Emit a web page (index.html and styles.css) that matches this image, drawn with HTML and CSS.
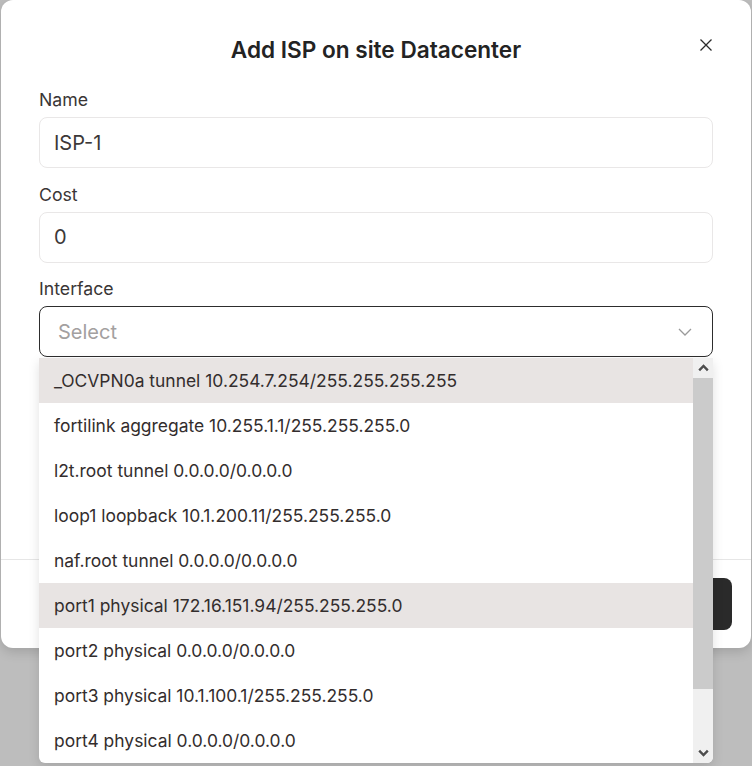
FILE: index.html
```html
<!DOCTYPE html>
<html lang="en">
<head>
    <meta charset="UTF-8">
    <meta name="viewport" content="width=device-width, initial-scale=1.0">
    <title>Add ISP</title>
    <link rel="stylesheet" href="styles.css">
</head>
<body>
    <div class="modal">
        <div class="modal-header">
            <h2 class="modal-title">Add ISP on site Datacenter</h2>
            <button class="close-btn" aria-label="Close">
                <svg width="14" height="14" viewBox="0 0 14 14">
                    <path d="M1.5 1.5 L12.5 12.5 M12.5 1.5 L1.5 12.5" stroke="#2b2b2b" stroke-width="1.3" fill="none"/>
                </svg>
            </button>
        </div>

        <div class="modal-body">
            <div class="field">
                <label class="field-label">Name</label>
                <input class="field-input" type="text" value="ISP-1">
            </div>
            <div class="field">
                <label class="field-label">Cost</label>
                <input class="field-input" type="text" value="0">
            </div>
            <div class="field">
                <label class="field-label">Interface</label>
                <div class="select-wrap">
                    <div class="select-box">
                        <span class="select-placeholder">Select</span>
                        <svg class="select-chevron" width="14" height="8" viewBox="0 0 14 8">
                            <path d="M1 1 L7 7 L13 1" stroke="#9a9a9a" stroke-width="1.3" fill="none"/>
                        </svg>
                    </div>
                    <div class="dropdown">
                        <ul class="options">
                            <li class="option active">_OCVPN0a tunnel 10.254.7.254/255.255.255.255</li>
                            <li class="option">fortilink aggregate 10.255.1.1/255.255.255.0</li>
                            <li class="option">l2t.root tunnel 0.0.0.0/0.0.0.0</li>
                            <li class="option">loop1 loopback 10.1.200.11/255.255.255.0</li>
                            <li class="option">naf.root tunnel 0.0.0.0/0.0.0.0</li>
                            <li class="option active">port1 physical 172.16.151.94/255.255.255.0</li>
                            <li class="option">port2 physical 0.0.0.0/0.0.0.0</li>
                            <li class="option">port3 physical 10.1.100.1/255.255.255.0</li>
                            <li class="option">port4 physical 0.0.0.0/0.0.0.0</li>
                        </ul>
                        <div class="scrollbar">
                            <div class="scroll-btn">
                                <svg width="11" height="8" viewBox="0 0 11 8">
                                    <path d="M1.2 6.3 L5.5 2 L9.8 6.3" stroke="#4d4d4d" stroke-width="2.4" fill="none"/>
                                </svg>
                            </div>
                            <div class="scroll-track">
                                <div class="scroll-thumb"></div>
                            </div>
                            <div class="scroll-btn">
                                <svg width="11" height="8" viewBox="0 0 11 8">
                                    <path d="M1.2 1.7 L5.5 6 L9.8 1.7" stroke="#4d4d4d" stroke-width="2.4" fill="none"/>
                                </svg>
                            </div>
                        </div>
                    </div>
                </div>
            </div>
        </div>

        <div class="modal-footer">
            <button class="btn-primary">Add</button>
        </div>
    </div>
</body>
</html>
```

FILE: styles.css
```css
* {
    box-sizing: border-box;
}

body {
    margin: 0;
    font-family: Inter, "Noto Sans", sans-serif;
    background-color: #bdbdbd;
    height: 766px;
    overflow: hidden;
}

.modal {
    width: 750px;
    margin: 0 auto;
    background: white;
    border-radius: 12px;
    box-shadow: 0 4px 12px rgba(0, 0, 0, 0.15);
}

.modal-header {
    display: flex;
    justify-content: center;
    align-items: center;
    padding: 36px 38px 0;
    position: relative;
}

.modal-title {
    margin: 0;
    font-size: 22.6px;
    line-height: 28px;
    font-weight: 600;
    color: #232323;
}

.close-btn {
    position: absolute;
    right: 38px;
    top: 38px;
    border: none;
    background: none;
    padding: 0;
    width: 14px;
    height: 14px;
    display: flex;
}

.modal-body {
    padding: 24px 38px 0;
    height: 495px;
}

.field {
    display: flex;
    flex-direction: column;
    margin-bottom: 14.5px;
}

.field-label {
    font-size: 17.7px;
    line-height: 24px;
    color: #3a3636;
    margin-bottom: 5px;
}

.field-input {
    height: 51px;
    border: 1px solid #e9e7e7;
    border-radius: 8px;
    padding: 0 14px;
    font-family: inherit;
    font-size: 20px;
    color: #3c3838;
    outline: none;
}

.select-wrap {
    position: relative;
}

.select-box {
    height: 51px;
    border: 1px solid #2d2d2d;
    border-radius: 8px;
    padding: 0 20px 0 18px;
    display: flex;
    align-items: center;
    justify-content: space-between;
}

.select-placeholder {
    font-size: 20px;
    color: #a3a0a0;
}

.dropdown {
    position: absolute;
    top: 52px;
    left: 0;
    right: 0;
    height: 405px;
    background: white;
    border-radius: 0 0 6px 6px;
    box-shadow: 0 4px 12px rgba(0, 0, 0, 0.12);
    display: flex;
    overflow: hidden;
    z-index: 10;
}

.options {
    list-style: none;
    margin: 0;
    padding: 0;
    flex: 1;
    overflow: hidden;
}

.option {
    height: 45px;
    line-height: 45px;
    padding: 0 15px;
    font-size: 17.45px;
    color: #332d2d;
    white-space: nowrap;
}

.option.active {
    background-color: #e8e4e3;
}

.scrollbar {
    width: 20px;
    background: #f0f0f0;
    display: flex;
    flex-direction: column;
}

.scroll-btn {
    height: 20px;
    display: flex;
    align-items: center;
    justify-content: center;
}

.scroll-track {
    flex: 1;
}

.scroll-thumb {
    height: 311px;
    background: #cbcbcb;
}

.modal-footer {
    border-top: 1px solid #e6e6e6;
    padding: 18px 19px 18px;
    display: flex;
    justify-content: flex-end;
}

.btn-primary {
    width: 110px;
    height: 52px;
    border: none;
    border-radius: 8px;
    background-color: #2a2a2a;
    color: white;
    font-family: inherit;
    font-size: 18px;
    font-weight: 600;
}
```
